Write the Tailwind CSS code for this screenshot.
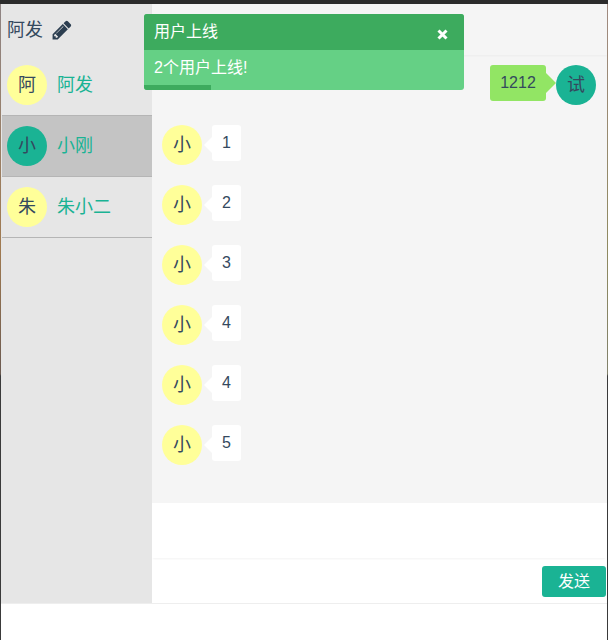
<!DOCTYPE html>
<html lang="en">
<head>
  <meta charset="UTF-8">
  <title>Chat</title>
  <script src="https://cdn.jsdelivr.net/npm/@tailwindcss/browser@4"></script>
</head>
<body class="bg-white font-['Liberation_Sans','Noto_Sans_CJK_SC',sans-serif] text-[#34495e]">
  <div class="relative h-[640px] w-[608px] overflow-hidden">
    <div class="h-1 bg-[#2b2b2b]"></div>

    <div class="flex h-[600px] border-b border-[#eeeeee] pl-px pr-px">
      <!-- sidebar -->
      <div class="w-[151px] shrink-0 bg-[#e6e6e6] pl-px">
        <div class="flex h-[51px] items-center pl-[5px] text-lg">
          <span>阿发</span>
          <svg class="ml-2 h-[22px] w-[22px]" viewBox="0 0 1792 1792" fill="#2c3e50">
            <path d="M491 1536l91-91-235-235-91 91v107h128v128h107zm523-928q0-22-22-22-10 0-17 7l-542 542q-7 7-7 17 0 22 22 22 10 0 17-7l542-542q7-7 7-17zm-54-192l416 416-832 832h-416v-416zm683 96q0 53-37 90l-166 166-416-416 166-165q36-38 90-38 53 0 91 38l235 234q37 39 37 91z"/>
          </svg>
        </div>
        <div class="flex h-[61px] items-start gap-2.5 border-b border-[#b5b5b5] px-[5px] pt-2.5 text-lg">
          <div class="flex h-10 w-10 items-center justify-center rounded-full bg-[#ffff99]">阿</div>
          <span class="leading-10 text-[#1ab394]">阿发</span>
        </div>
        <div class="flex h-[61px] items-start gap-2.5 border-b border-[#b5b5b5] bg-[#c4c4c4] px-[5px] pt-2.5 text-lg">
          <div class="flex h-10 w-10 items-center justify-center rounded-full bg-[#1ab394]">小</div>
          <span class="leading-10 text-[#1ab394]">小刚</span>
        </div>
        <div class="flex h-[61px] items-start gap-2.5 border-b border-[#b5b5b5] px-[5px] pt-2.5 text-lg">
          <div class="flex h-10 w-10 items-center justify-center rounded-full bg-[#ffff99]">朱</div>
          <span class="leading-10 text-[#1ab394]">朱小二</span>
        </div>
      </div>

      <!-- main -->
      <div class="flex min-w-0 flex-1 flex-col">
        <div class="relative h-[51px] bg-[#f5f5f5] shadow-[0_1px_2px_rgba(0,0,0,0.04)]"></div>
        <div class="flex h-[448px] flex-col bg-[#f5f5f5] pl-2.5 pr-[11px] pt-2.5">
          <div class="flex h-[60px] items-start justify-end">
            <div class="relative flex h-9 w-14 items-center justify-center rounded-[3px] bg-[#92e564] text-base">
              1212
              <span class="absolute left-full top-[8px] h-0 w-0 border-y-[10px] border-l-[10px] border-y-transparent border-l-[#92e564]"></span>
            </div>
            <div class="ml-2.5 flex h-10 w-10 items-center justify-center rounded-full bg-[#1ab394] text-lg">试</div>
          </div>
          <div class="flex h-[60px] items-start">
            <div class="flex h-10 w-10 items-center justify-center rounded-full bg-[#ffff99] text-lg">小</div>
            <div class="relative ml-2.5 flex h-9 w-[29px] items-center justify-center rounded-[3px] bg-white text-base">
              1
              <span class="absolute right-full top-[12px] h-0 w-0 border-y-[8px] border-r-[8px] border-y-transparent border-r-white"></span>
            </div>
          </div>
          <div class="flex h-[60px] items-start">
            <div class="flex h-10 w-10 items-center justify-center rounded-full bg-[#ffff99] text-lg">小</div>
            <div class="relative ml-2.5 flex h-9 w-[29px] items-center justify-center rounded-[3px] bg-white text-base">
              2
              <span class="absolute right-full top-[12px] h-0 w-0 border-y-[8px] border-r-[8px] border-y-transparent border-r-white"></span>
            </div>
          </div>
          <div class="flex h-[60px] items-start">
            <div class="flex h-10 w-10 items-center justify-center rounded-full bg-[#ffff99] text-lg">小</div>
            <div class="relative ml-2.5 flex h-9 w-[29px] items-center justify-center rounded-[3px] bg-white text-base">
              3
              <span class="absolute right-full top-[12px] h-0 w-0 border-y-[8px] border-r-[8px] border-y-transparent border-r-white"></span>
            </div>
          </div>
          <div class="flex h-[60px] items-start">
            <div class="flex h-10 w-10 items-center justify-center rounded-full bg-[#ffff99] text-lg">小</div>
            <div class="relative ml-2.5 flex h-9 w-[29px] items-center justify-center rounded-[3px] bg-white text-base">
              4
              <span class="absolute right-full top-[12px] h-0 w-0 border-y-[8px] border-r-[8px] border-y-transparent border-r-white"></span>
            </div>
          </div>
          <div class="flex h-[60px] items-start">
            <div class="flex h-10 w-10 items-center justify-center rounded-full bg-[#ffff99] text-lg">小</div>
            <div class="relative ml-2.5 flex h-9 w-[29px] items-center justify-center rounded-[3px] bg-white text-base">
              4
              <span class="absolute right-full top-[12px] h-0 w-0 border-y-[8px] border-r-[8px] border-y-transparent border-r-white"></span>
            </div>
          </div>
          <div class="flex h-[60px] items-start">
            <div class="flex h-10 w-10 items-center justify-center rounded-full bg-[#ffff99] text-lg">小</div>
            <div class="relative ml-2.5 flex h-9 w-[29px] items-center justify-center rounded-[3px] bg-white text-base">
              5
              <span class="absolute right-full top-[12px] h-0 w-0 border-y-[8px] border-r-[8px] border-y-transparent border-r-white"></span>
            </div>
          </div>
        </div>
        <div class="mr-px h-[55px] bg-white shadow-[0_2px_2px_-1px_rgba(0,0,0,0.05)]"></div>
        <div class="mr-px flex flex-1 items-start justify-end pt-2">
          <button class="h-[31px] w-16 rounded-[3px] bg-[#1ab394] text-base text-white">发送</button>
        </div>
      </div>
    </div>

    <!-- toast -->
    <div class="absolute left-[144px] top-3.5 w-80 overflow-hidden rounded-[3px] bg-[#65d085] text-base text-white">
      <div class="flex h-9 items-center justify-between bg-[#3dab5e] pl-2.5 pr-4">
        <span>用户上线</span>
        <svg class="mt-1 h-[11px] w-[11px]" viewBox="0 0 11 11" fill="none" stroke="white" stroke-width="3">
          <path d="M1.5 1.5l8 8M9.5 1.5l-8 8"/>
        </svg>
      </div>
      <div class="flex h-[35px] items-center pl-2.5">2个用户上线!</div>
      <div class="h-[5px] w-[67px] bg-[#3dab5e]"></div>
    </div>

    <!-- what shows behind the window at its left and right edge -->
    <div class="absolute bottom-0 left-0 top-1 w-px bg-[linear-gradient(to_bottom,#8f8585_0,#a07a50_245px,#6b5a50_370px,#3a3a3a_372px)]"></div>
    <div class="absolute bottom-0 right-0 top-1 w-px bg-[linear-gradient(to_bottom,#a08a80_0,#8f8a60_245px,#80806a_370px,#3a3a3a_372px)]"></div>
  </div>
</body>
</html>
